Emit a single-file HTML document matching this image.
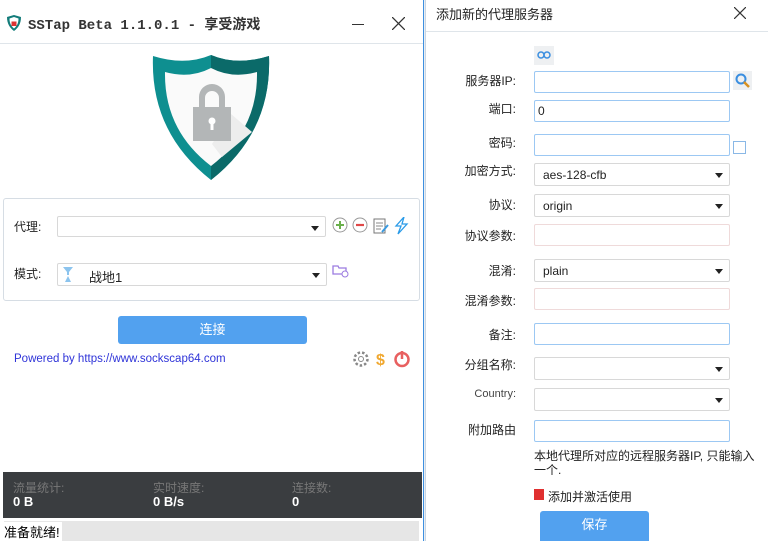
<!DOCTYPE html><html><head><meta charset="utf-8"><style>
*{margin:0;padding:0;box-sizing:border-box}
body{width:768px;height:541px;overflow:hidden;background:#e9eef3;font-family:"Liberation Sans","Noto Sans CJK SC",sans-serif;font-size:12px;color:#222;position:relative}
.a{position:absolute}
.inp{position:absolute;background:#fff;border:1px solid #9cc8f3;border-radius:2px;height:22px}
.inp.g{border-color:#d8d8d8}
.inp.p{border-color:#efdada}
.dd::after{content:"";position:absolute;right:6px;top:9px;border-left:4px solid transparent;border-right:4px solid transparent;border-top:5px solid #222}
.lb{position:absolute;right:252px;font-size:12px;text-align:right;color:#222}
</style></head><body>
<div class="a" style="left:0;top:0;width:424px;height:541px;background:#fff;border-right:1px solid #3d8fe0"></div>
<div class="a" style="left:0;top:43px;width:423px;height:1px;background:#dfe5ea"></div>
<svg class="a" style="left:6px;top:15px" width="16" height="16" viewBox="0 0 16 16"><path d="M1 2 L8 0 L15 2 C15 9 12 13 8 16 C4 13 1 9 1 2Z" fill="#137c7a"/><path d="M3.5 3.5 L8 2 L12.5 3.5 C12.5 8.5 10.5 11.5 8 13.5 C5.5 11.5 3.5 8.5 3.5 3.5Z" fill="#fff"/><rect x="5.5" y="6.5" width="5" height="4.5" fill="#d33"/></svg>
<div class="a" style="left:28px;top:14px;font-family:'Liberation Mono','Noto Sans CJK SC',monospace;font-size:14px;font-weight:bold;color:#333">SSTap Beta 1.1.0.1 - 享受游戏</div>
<div class="a" style="left:352px;top:24px;width:12px;height:1px;background:#333"></div>
<svg class="a" style="left:392px;top:17px" width="13" height="13"><path d="M0 0L13 13M13 0L0 13" stroke="#333" stroke-width="1.3"/></svg>
<svg class="a" style="left:150px;top:52px" width="122" height="130" viewBox="0 0 122 130">
<path d="M3 4 Q35 14 61 3 Q87 14 119 4 Q122 80 61 128 Q0 80 3 4Z" fill="#0e8f90"/>
<path d="M61 3 Q87 14 119 4 Q122 80 61 128Z" fill="#0b6a69"/>
<path d="M15 20 Q40 27 61 16 Q82 27 107 20 Q108 78 61 114 Q14 78 15 20Z" fill="#fafafa"/>
<path d="M81 62 L102 80 L72 105 L62 92Z" fill="#ededed"/>
<rect x="43" y="55" width="38" height="34" fill="#b3b6b7"/>
<path d="M49 56 V45 A13 13 0 0 1 75 45 V56 H69 V46 A7 7 0 0 0 55 46 V56Z" fill="#b3b6b7"/>
<circle cx="62" cy="69" r="3.5" fill="#fff"/><rect x="60.5" y="70" width="3" height="8" fill="#fff"/>
</svg>
<div class="a" style="left:3px;top:198px;width:417px;height:103px;border:1px solid #d6dde4;border-radius:3px"></div>
<div class="a" style="left:14px;top:218px;font-size:12px">代理:</div>
<div class="inp g dd" style="left:57px;top:216px;width:269px;height:21px"></div>
<svg class="a" style="left:332px;top:217px" width="78" height="18"><circle cx="8" cy="8" r="7" fill="none" stroke="#999"/><path d="M4 8H12M8 4V12" stroke="#6ab04c" stroke-width="2"/><circle cx="28" cy="8" r="7" fill="none" stroke="#999"/><path d="M24 8H32" stroke="#e04848" stroke-width="2.2"/><rect x="42" y="2" width="11" height="14" fill="#fff" stroke="#777"/><path d="M44 6H51M44 9H51M44 12H49" stroke="#888"/><path d="M50 15L56 8" stroke="#3a9ae0" stroke-width="2"/><path d="M72 0L64 9H69L66 17L75 7H70Z" fill="none" stroke="#2a9be8" stroke-width="1.3"/></svg>
<div class="a" style="left:14px;top:265px">模式:</div>
<div class="inp g dd" style="left:57px;top:263px;width:270px;height:23px"></div>
<svg class="a" style="left:62px;top:266px" width="12" height="17"><path d="M1 1H11L7 6V9H5V6Z" fill="#8cc4ee"/><path d="M3 16L6 10L9 16Z" fill="#8cc4ee"/></svg>
<div class="a" style="left:89px;top:267px;font-size:13px">战地1</div>
<svg class="a" style="left:332px;top:264px" width="17" height="14"><path d="M1 2H6L7 4H14V10H1Z" fill="none" stroke="#9b7be0" stroke-width="1.3"/><circle cx="13" cy="10" r="3" fill="#fff" stroke="#9b7be0"/></svg>
<div class="a" style="left:118px;top:316px;width:189px;height:28px;background:#52a1ef;border-radius:3px;color:#fff;font-size:13px;text-align:center;line-height:28px">连接</div>
<div class="a" style="left:14px;top:353px;color:#2f34d8;font-size:11.5px">Powered by https://www.sockscap64.com</div>
<svg class="a" style="left:352px;top:350px" width="60" height="18"><circle cx="9" cy="9" r="6.5" fill="none" stroke="#888" stroke-width="2.5" stroke-dasharray="2.5 2"/><circle cx="9" cy="9" r="2.5" fill="none" stroke="#888"/><text x="24" y="15" font-size="16" font-weight="bold" fill="#f0a830" font-family="Liberation Sans">$</text><circle cx="50" cy="9.5" r="6.5" fill="none" stroke="#e86060" stroke-width="2.5"/><path d="M50 1V9" stroke="#e86060" stroke-width="2.5"/></svg>
<div class="a" style="left:3px;top:472px;width:419px;height:46px;background:#3a3d40"></div>
<div class="a" style="left:13px;top:479px;color:#777;font-size:12px">流量统计:</div>
<div class="a" style="left:153px;top:479px;color:#777;font-size:12px">实时速度:</div>
<div class="a" style="left:292px;top:479px;color:#777;font-size:12px">连接数:</div>
<div class="a" style="left:13px;top:494px;color:#fff;font-weight:bold;font-size:13px">0 B</div>
<div class="a" style="left:153px;top:494px;color:#fff;font-weight:bold;font-size:13px">0 B/s</div>
<div class="a" style="left:292px;top:494px;color:#fff;font-weight:bold;font-size:13px">0</div>
<div class="a" style="left:4px;top:521px;width:415px;height:20px;background:#e6e6e6"></div>
<div class="a" style="left:4px;top:522px;background:#fff;padding-right:2px;font-size:13px;color:#000">准备就绪!</div>
<div class="a" style="left:425px;top:0;width:343px;height:541px;background:#fff;border-left:1px solid #c8d6e4"></div>
<div class="a" style="left:426px;top:31px;width:342px;height:1px;background:#dfe5ea"></div>
<div class="a" style="left:436px;top:4px;font-size:13px">添加新的代理服务器</div>
<svg class="a" style="left:734px;top:7px" width="12" height="12"><path d="M0 0L12 12M12 0L0 12" stroke="#333" stroke-width="1.2"/></svg>
<div class="a" style="left:534px;top:46px;width:20px;height:19px;background:#eef0f2"></div>
<svg class="a" style="left:537px;top:51px" width="14" height="8"><rect x="1" y="1" width="6" height="6" rx="3" fill="none" stroke="#3a8ee0" stroke-width="1.5"/><rect x="7" y="1" width="6" height="6" rx="3" fill="none" stroke="#3a8ee0" stroke-width="1.5"/></svg>
<div class="lb" style="top:72px">服务器IP:</div><div class="inp" style="left:534px;top:71px;width:196px"></div>
<div class="a" style="left:733px;top:71px;width:19px;height:19px;background:#eef0f2"></div>
<svg class="a" style="left:735px;top:73px" width="16" height="16"><circle cx="6" cy="6" r="4.5" fill="none" stroke="#3a8ee0" stroke-width="2"/><path d="M9 9L14 14" stroke="#d89020" stroke-width="2.5"/></svg>
<div class="lb" style="top:100px">端口:</div><div class="inp" style="left:534px;top:100px;width:196px;padding:3px 3px;font-size:12px">0</div>
<div class="lb" style="top:134px">密码:</div><div class="inp" style="left:534px;top:134px;width:196px"></div>
<div class="a" style="left:733px;top:141px;width:13px;height:13px;border:1px solid #8ab8e6"></div>
<div class="lb" style="top:162px">加密方式:</div><div class="inp g dd" style="left:534px;top:163px;width:196px;height:23px;padding:4px 8px">aes-128-cfb</div>
<div class="lb" style="top:196px">协议:</div><div class="inp g dd" style="left:534px;top:194px;width:196px;height:23px;padding:4px 8px">origin</div>
<div class="lb" style="top:227px">协议参数:</div><div class="inp p" style="left:534px;top:224px;width:196px"></div>
<div class="lb" style="top:262px">混淆:</div><div class="inp g dd" style="left:534px;top:259px;width:196px;height:23px;padding:4px 8px">plain</div>
<div class="lb" style="top:292px">混淆参数:</div><div class="inp p" style="left:534px;top:288px;width:196px"></div>
<div class="lb" style="top:326px">备注:</div><div class="inp" style="left:534px;top:323px;width:196px"></div>
<div class="lb" style="top:356px">分组名称:</div><div class="inp g dd" style="left:534px;top:357px;width:196px;height:23px"></div>
<div class="lb" style="top:388px;font-size:11px;color:#444">Country:</div><div class="inp g dd" style="left:534px;top:388px;width:196px;height:23px"></div>
<div class="lb" style="top:421px">附加路由</div><div class="inp" style="left:534px;top:420px;width:196px"></div>
<div class="a" style="left:534px;top:449px;width:225px;font-size:12px;line-height:14px">本地代理所对应的远程服务器IP, 只能输入一个.</div>
<div class="a" style="left:534px;top:489px;width:10px;height:11px;background:#e03030"></div>
<div class="a" style="left:548px;top:488px;font-size:12px">添加并激活使用</div>
<div class="a" style="left:540px;top:511px;width:109px;height:30px;background:#52a1ef;border-radius:3px 3px 0 0;color:#fff;font-size:13px;text-align:center;line-height:28px">保存</div>
</body></html>
